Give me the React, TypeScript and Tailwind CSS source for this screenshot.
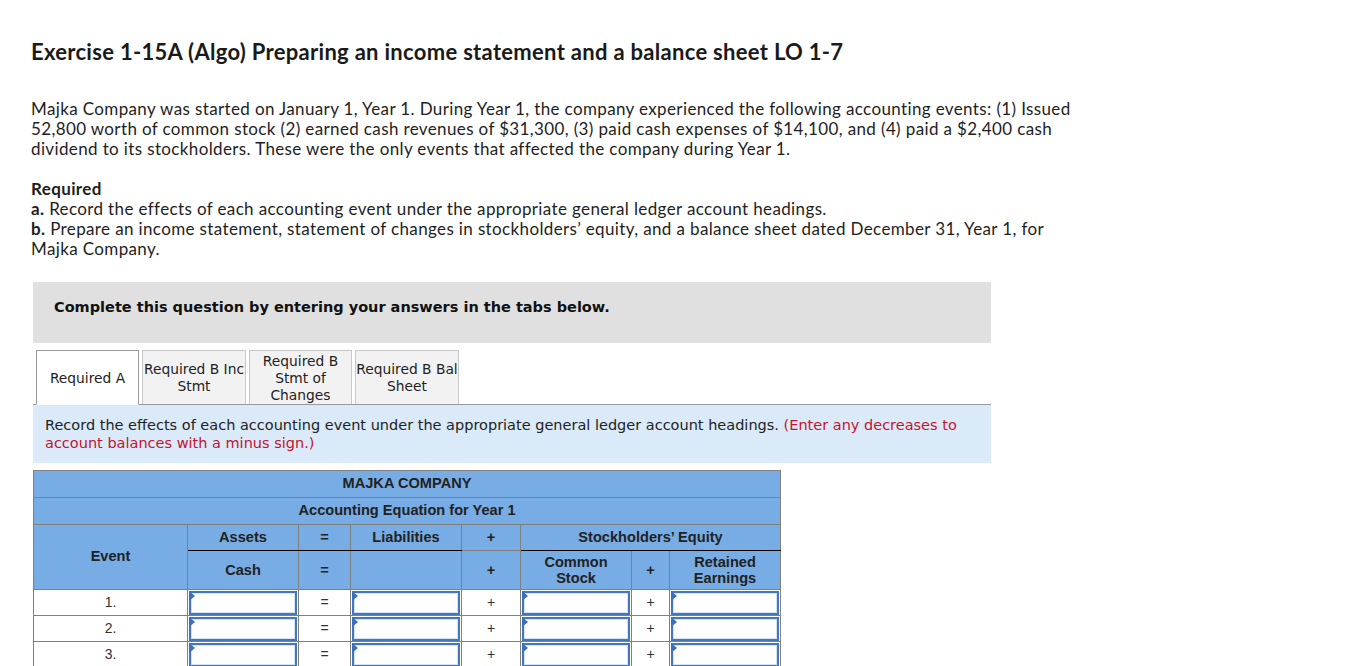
import React from 'react';

const tabs = [
  { label: ['Required A'], active: true, w: 'w-[103px]' },
  { label: ['Required B Inc', 'Stmt'], active: false, w: 'w-[104px]' },
  { label: ['Required B', 'Stmt of', 'Changes'], active: false, w: 'w-[103px]' },
  { label: ['Required B Bal', 'Sheet'], active: false, w: 'w-[104px]' },
];

function AnswerBox() {
  return (
    <div className="relative mx-px h-[24px] border-2 border-[#4577bd] bg-white shadow-[inset_0_0_0_1px_#d3e3f6]">
      <span className="absolute -left-[2px] -top-[2px] h-0 w-0 border-y-[5px] border-l-[6px] border-y-transparent border-l-[#3a70be]" />
    </div>
  );
}

function DataRow({ n }: { n: number }) {
  const cell = 'border border-[#808080] p-0';
  return (
    <tr className="h-[26px] bg-white text-[14px] font-normal text-[#333]">
      <td className={`${cell} text-center`}>{n}.</td>
      <td className={cell}>
        <AnswerBox />
      </td>
      <td className={`${cell} text-center`}>=</td>
      <td className={cell}>
        <AnswerBox />
      </td>
      <td className={`${cell} text-center`}>+</td>
      <td className={cell}>
        <AnswerBox />
      </td>
      <td className={`${cell} text-center`}>+</td>
      <td className={cell}>
        <AnswerBox />
      </td>
    </tr>
  );
}

export default function App() {
  const hd = 'border border-[#808080] p-0 text-center';
  return (
    <div className="min-h-screen bg-white pl-[31px] pt-[38px] text-[#1e1e1e]" style={{ fontFamily: 'Lato, "Open Sans", sans-serif' }}>
      <h1 className="text-[22px] font-bold leading-[28px] tracking-[0.3px] text-[#1a1a1a]">
        Exercise 1-15A (Algo) Preparing an income statement and a balance sheet LO 1-7
      </h1>

      <div className="mt-[33px] text-[17px] leading-[20px] tracking-[0.37px]">
        <div className="whitespace-nowrap">
          Majka Company was started on January 1, Year 1. During Year 1, the company experienced the following accounting events: (1) Issued
        </div>
        <div className="whitespace-nowrap">
          52,800 worth of common stock (2) earned cash revenues of $31,300, (3) paid cash expenses of $14,100, and (4) paid a $2,400 cash
        </div>
        <div className="whitespace-nowrap">
          dividend to its stockholders. These were the only events that affected the company during Year 1.
        </div>
      </div>

      <div className="mt-[20px] text-[17px] leading-[20px] tracking-[0.37px]">
        <div className="font-bold">Required</div>
        <div className="whitespace-nowrap">
          <span className="font-bold">a.</span> Record the effects of each accounting event under the appropriate general ledger account headings.
        </div>
        <div className="whitespace-nowrap">
          <span className="font-bold">b.</span> Prepare an income statement, statement of changes in stockholders’ equity, and a balance sheet dated December 31, Year 1, for
        </div>
        <div>Majka Company.</div>
      </div>

      <div className="ml-[2px] w-[958px]" style={{ fontFamily: '"DejaVu Sans", Verdana, sans-serif' }}>
        <div className="mt-[23px] h-[61px] bg-[#e0e0e0] pl-[21px] pt-[16px] text-[14.5px] font-bold leading-[18px] text-[#111]">
          Complete this question by entering your answers in the tabs below.
        </div>

        <div className="mt-[7px] flex items-start gap-[3px] border-b border-[#999] pl-[3px]">
          {tabs.map((t) => (
            <div
              key={t.label.join(' ')}
              className={`${t.w} flex flex-col items-center justify-center border pt-px text-center text-[13.8px] leading-[17px] text-[#222] ${
                t.active ? '-mb-px h-[55px] border-[#9a9a9a] border-b-white bg-white' : 'h-[54px] border-[#c8c8c8] border-b-0 bg-[#f2f2f2]'
              }`}
            >
              {t.label.map((l) => (
                <div key={l} className="whitespace-nowrap">
                  {l}
                </div>
              ))}
            </div>
          ))}
        </div>

        <div className="h-[58px] bg-[#daeaf8] px-[12px] pt-[11px] text-[14.5px] leading-[18px] text-[#222]">
          Record the effects of each accounting event under the appropriate general ledger account headings.{' '}
          <span className="text-[#c4122f]">(Enter any decreases to account balances with a minus sign.)</span>
        </div>
      </div>

      <table
        className="ml-[2px] mt-[7px] w-[747px] table-fixed border-collapse text-[14.6px] font-bold text-[#222]"
        style={{ fontFamily: '"Liberation Sans", Arial, sans-serif' }}
      >
        <colgroup>
          <col className="w-[154px]" />
          <col className="w-[111px]" />
          <col className="w-[52px]" />
          <col className="w-[111px]" />
          <col className="w-[59px]" />
          <col className="w-[111px]" />
          <col className="w-[38px]" />
          <col className="w-[111px]" />
        </colgroup>
        <tbody>
          <tr className="h-[27px] bg-[#77ace5]">
            <td colSpan={8} className={hd}>
              MAJKA COMPANY
            </td>
          </tr>
          <tr className="h-[27px] bg-[#77ace5]">
            <td colSpan={8} className={hd}>
              Accounting Equation for Year 1
            </td>
          </tr>
          <tr className="h-[26px] bg-[#77ace5]">
            <td rowSpan={2} className={hd}>
              Event
            </td>
            <td className={`${hd} border-b-black`}>Assets</td>
            <td className={`${hd} border-b-black`}>=</td>
            <td className={`${hd} border-b-black`}>Liabilities</td>
            <td className={hd}>+</td>
            <td colSpan={3} className={`${hd} border-b-black`}>
              Stockholders’ Equity
            </td>
          </tr>
          <tr className="h-[39px] bg-[#77ace5] leading-[16px]">
            <td className={hd}>Cash</td>
            <td className={hd}>=</td>
            <td className={hd}></td>
            <td className={hd}>+</td>
            <td className={hd}>
              Common
              <br />
              Stock
            </td>
            <td className={hd}>+</td>
            <td className={hd}>
              Retained
              <br />
              Earnings
            </td>
          </tr>
          <DataRow n={1} />
          <DataRow n={2} />
          <DataRow n={3} />
        </tbody>
      </table>
    </div>
  );
}
